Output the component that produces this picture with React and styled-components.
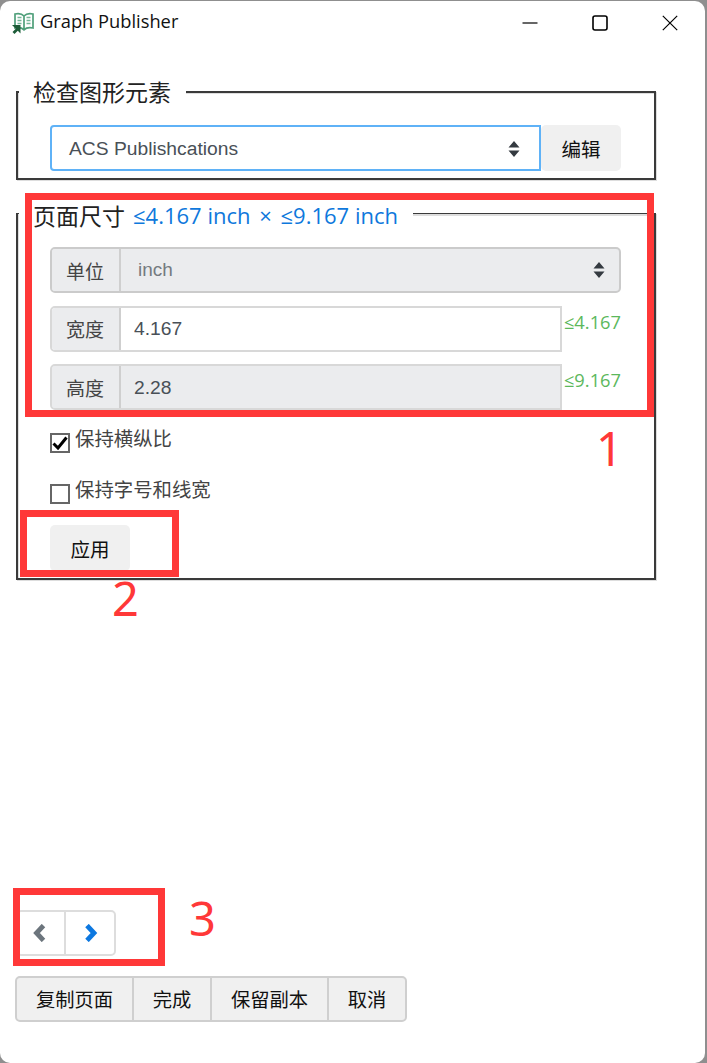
import React from "react";
import styled, { createGlobalStyle } from "styled-components";

const GlobalStyle = createGlobalStyle`
  * { box-sizing: border-box; }
  html, body { margin: 0; padding: 0; }
  body {
    width: 707px;
    height: 1063px;
    overflow: hidden;
    font-family: "Noto Sans CJK SC", "Liberation Sans", sans-serif;
  }
`;

const CJK = `"Noto Sans CJK SC", sans-serif`;
const LATIN = `"Open Sans", "Noto Sans CJK SC", sans-serif`;
const ARIAL = `"Liberation Sans", "Noto Sans CJK SC", sans-serif`;

const Desktop = styled.div`
  position: relative;
  width: 707px;
  height: 1063px;
  padding: 1px 2px 0 0;
  background: #8f8f8f;
  overflow: hidden;
`;

const Window = styled.div`
  display: flex;
  flex-direction: column;
  height: 100%;
  background: #fff;
  border-radius: 10px;
`;

const TitleBar = styled.header`
  display: flex;
  align-items: center;
  height: 43px;
  padding-left: 11px;
`;

const AppTitle = styled.span`
  margin: 0 0 5px 5px;
  font: 18.300px ${LATIN};
  color: #111;
`;

const WindowControls = styled.div`
  display: flex;
  margin-left: auto;
`;

const WindowButton = styled.div`
  display: flex;
  align-items: center;
  justify-content: center;
  width: 70px;
  height: 42px;
`;

const Content = styled.main`
  display: flex;
  flex-direction: column;
  padding: 47px 0 0 16px;
`;

const Panel = styled.section`
  display: flex;
  flex-direction: column;
  width: 640px;
  margin-top: ${(p) => p.$top || 0}px;
  padding: 0 33px 7px 32px;
  border: 2px solid #3a3a3a;
  border-top-width: ${(p) => (p.$thin ? 1 : 2)}px;
  box-shadow: inset 1px ${(p) => (p.$thin ? 2 : 1)}px 0 #ddd, 1px 1px 0 #ddd;
`;

const Legend = styled.div`
  align-self: flex-start;
  display: flex;
  align-items: center;
  height: 28px;
  margin: ${(p) => (p.$thin ? -13 : -16)}px 0 0 -31px;
  padding: 0 15px 0 14px;
  background: #fff;
  font: 23px/28px ${CJK};
  color: #222;
`;

const LegendHint = styled.span`
  margin-left: 8px;
  font: 22px/28px ${LATIN};
  color: #0e78dc;
`;

const Times = styled.span`
  margin: 0 3px;
`;

const SelectRow = styled.div`
  display: flex;
  height: 46px;
  margin-top: 20px;
`;

const FocusSelect = styled.div`
  display: flex;
  align-items: center;
  justify-content: space-between;
  flex: 1;
  padding: 1px 19px 0 17px;
  border: 2px solid #5fb2f7;
  border-radius: 4px 0 0 4px;
  font: 19.250px ${ARIAL};
  color: #495057;
`;

const Button = styled.button`
  width: 80px;
  height: 46px;
  padding: 0;
  border: 0;
  border-radius: 5px;
  background: #f0f0f0;
  font: 19.500px ${CJK};
  color: #111;
`;

const Fields = styled.div`
  display: flex;
  flex-direction: column;
  gap: 12.500px;
  margin-top: 18px;
`;

const FieldRow = styled.div`
  display: flex;
  height: 46px;
`;

const FieldGroup = styled.div`
  display: flex;
  width: ${(p) => (p.$wide ? 571 : 512)}px;
  border: 2px solid ${(p) => (p.$wide ? "#cbcbcb" : "#d8d8d8")};
  border-radius: 5px 0 0 5px;
  border-top-right-radius: ${(p) => (p.$wide ? 5 : 0)}px;
  border-bottom-right-radius: ${(p) => (p.$wide ? 5 : 0)}px;
  background: ${(p) => (p.$muted ? "#ebecee" : "#fff")};
`;

const Addon = styled.span`
  display: flex;
  align-items: center;
  justify-content: center;
  width: 69px;
  flex: none;
  padding-right: 1px;
  border-right: 2px solid #cfcfcf;
  border-radius: 3px 0 0 3px;
  background: #ebecee;
  font: 19px ${CJK};
  color: #444;
`;

const FieldInput = styled.input`
  flex: 1;
  min-width: 0;
  padding: 1px 0 0 13px;
  border: 0;
  outline: 0;
  background: transparent;
  font: 19.250px ${ARIAL};
  color: #495057;
`;

const UnitSelect = styled.div`
  display: flex;
  align-items: center;
  justify-content: space-between;
  flex: 1;
  padding: 0 14px 0 17px;
  font: 19px ${ARIAL};
  color: #757a80;
`;

const Limit = styled.span`
  margin: 3px 0 0 2px;
  font: 18.300px/26px ${LATIN};
  color: #5cb85c;
`;

const CheckRow = styled.label`
  display: flex;
  align-items: flex-start;
  height: 20px;
  margin-top: ${(p) => p.$top}px;
  font: 19.400px/10px ${CJK};
  color: #444;
`;

const CheckBox = styled.span`
  display: flex;
  align-items: center;
  justify-content: center;
  width: 20px;
  height: 20px;
  margin-right: 5px;
  border: 2px solid #666;
  background: #fff;
`;

const ApplyButton = styled(Button)`
  margin-top: 21px;
`;

const NavGroup = styled.div`
  display: flex;
  width: 100px;
  height: 46px;
  margin-top: 330px;
  border: 2px solid #ddd;
  border-radius: 5px;
`;

const NavButton = styled.div`
  display: flex;
  align-items: center;
  justify-content: center;
  width: ${(p) => p.$w}px;
  & + & { border-left: 2px solid #ddd; }
`;

const ActionGroup = styled.div`
  display: flex;
  align-self: flex-start;
  height: 46px;
  margin: 20px 0 0 -1px;
  border: 2px solid #cfcfcf;
  border-radius: 5px;
  background: #f0f0f0;
`;

const ActionButton = styled.div`
  display: flex;
  align-items: center;
  justify-content: center;
  width: ${(p) => p.$w}px;
  font: 19.300px ${CJK};
  color: #111;
  & + & { border-left: 2px solid #cfcfcf; }
`;

const Callout = styled.div`
  position: absolute;
  left: ${(p) => p.$x}px;
  top: ${(p) => p.$y}px;
  width: ${(p) => p.$w}px;
  height: ${(p) => p.$h}px;
  border: 7px solid #ff3838;
`;

const CalloutNumber = styled.span`
  position: absolute;
  left: ${(p) => p.$x}px;
  top: ${(p) => p.$y}px;
  font: 47px/66px "Noto Sans", sans-serif;
  color: #ff3838;
`;

const BookIcon = () => (
  <svg width="24" height="22" viewBox="0 0 24 22" fill="none">
    <path
      d="M13 4C11 1.800 7.500 1.300 4 2v14c3.500-.6 7-.2 9 1.800 2-2 5.500-2.400 9-1.800V2c-3.500-.7-7-.2-9 2zM13 4v13.500"
      stroke="#4f9f7a"
      strokeWidth="1.700"
    />
    <path
      d="M6.500 5.500h4M6.500 8.500h4M6.500 11.500h4M15.500 5.500h4M15.500 8.500h4M15.500 11.500h4"
      stroke="#74b598"
      strokeWidth="1.400"
    />
    <path d="M1 13h8.500v8.500l-2.700-2.800L3.500 22 1.500 20l3.300-3.300L1 13z" fill="#1d5c38" />
  </svg>
);

const UpDown = () => (
  <svg width="12" height="16" viewBox="0 0 12 16">
    <path d="M6 0l5.500 6.500H.5zM6 16L.5 9.500h11z" fill="#343a40" />
  </svg>
);

const Chevron = ({ color, flip }) => (
  <svg width="16" height="18" viewBox="0 0 16 18">
    <path
      d={flip ? "M10.500 1.500L3.500 9l7 7.500" : "M5 1.500L12 9l-7 7.500"}
      fill="none"
      stroke={color}
      strokeWidth="4.800"
    />
  </svg>
);

const App = () => {
  return (
    <Desktop>
      <GlobalStyle />
      <Window>
        <TitleBar>
          <BookIcon />
          <AppTitle>Graph Publisher</AppTitle>
          <WindowControls>
            <WindowButton>
              <svg width="16" height="16" viewBox="0 0 16 16">
                <path d="M.5 8h15" stroke="#000" strokeWidth="1.200" />
              </svg>
            </WindowButton>
            <WindowButton>
              <svg width="16" height="16" viewBox="0 0 16 16" fill="none">
                <rect x="1" y="1" width="14" height="14" rx="2" stroke="#000" strokeWidth="1.600" />
              </svg>
            </WindowButton>
            <WindowButton>
              <svg width="16" height="16" viewBox="0 0 16 16">
                <path d="M.8.8l14.400 14.400M15.200.8L.8 15.200" stroke="#000" strokeWidth="1.200" />
              </svg>
            </WindowButton>
          </WindowControls>
        </TitleBar>

        <Content>
          <Panel>
            <Legend>检查图形元素</Legend>
            <SelectRow>
              <FocusSelect>
                ACS Publishcations
                <UpDown />
              </FocusSelect>
              <Button>编辑</Button>
            </SelectRow>
          </Panel>

          <Panel $top={33} $thin>
            <Legend $thin>
              页面尺寸
              <LegendHint>
                ≤4.167 inch <Times>×</Times> ≤9.167 inch
              </LegendHint>
            </Legend>
            <Fields>
              <FieldRow>
                <FieldGroup $wide $muted>
                  <Addon>单位</Addon>
                  <UnitSelect>
                    inch
                    <UpDown />
                  </UnitSelect>
                </FieldGroup>
              </FieldRow>
              <FieldRow>
                <FieldGroup>
                  <Addon>宽度</Addon>
                  <FieldInput defaultValue="4.167" />
                </FieldGroup>
                <Limit>≤4.167</Limit>
              </FieldRow>
              <FieldRow>
                <FieldGroup $muted>
                  <Addon>高度</Addon>
                  <FieldInput defaultValue="2.28" readOnly />
                </FieldGroup>
                <Limit>≤9.167</Limit>
              </FieldRow>
            </Fields>
            <CheckRow $top={23}>
              <CheckBox>
                <svg width="16" height="14" viewBox="0 0 16 14">
                  <path d="M1.500 7.500l4.500 4.500L14.500 1.500" fill="none" stroke="#000" strokeWidth="3" />
                </svg>
              </CheckBox>
              保持横纵比
            </CheckRow>
            <CheckRow $top={31}>
              <CheckBox />
              保持字号和线宽
            </CheckRow>
            <ApplyButton>应用</ApplyButton>
          </Panel>

          <NavGroup>
            <NavButton $w={46}>
              <Chevron color="#6c757d" flip />
            </NavButton>
            <NavButton $w={50}>
              <Chevron color="#0d78e0" />
            </NavButton>
          </NavGroup>

          <ActionGroup>
            <ActionButton $w={115}>复制页面</ActionButton>
            <ActionButton $w={78}>完成</ActionButton>
            <ActionButton $w={117}>保留副本</ActionButton>
            <ActionButton $w={78}>取消</ActionButton>
          </ActionGroup>
        </Content>
      </Window>

      <Callout $x={25} $y={193} $w={629} $h={224} />
      <Callout $x={20} $y={510} $w={159} $h={67} />
      <Callout $x={13} $y={888} $w={152} $h={78} />
      <CalloutNumber $x={596} $y={415}>1</CalloutNumber>
      <CalloutNumber $x={112} $y={565}>2</CalloutNumber>
      <CalloutNumber $x={189} $y={885}>3</CalloutNumber>
    </Desktop>
  );
};

export default App;
